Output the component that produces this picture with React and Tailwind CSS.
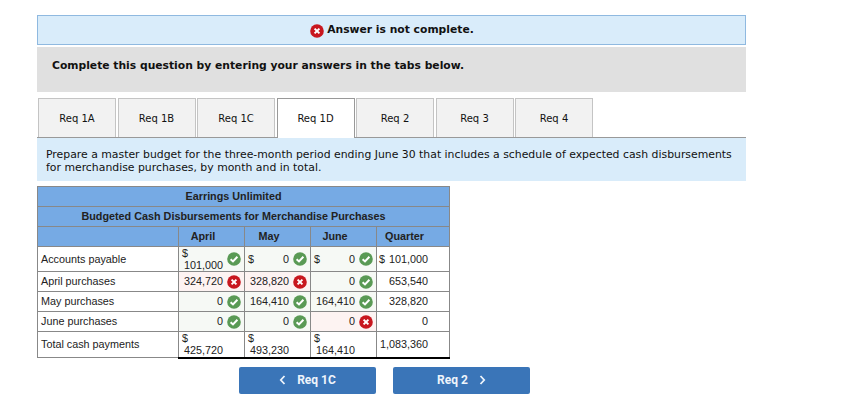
const tabs = ["Req 1A", "Req 1B", "Req 1C", "Req 1D", "Req 2", "Req 3", "Req 4"];

const Mark = ({ ok }) => (
  <svg width="14" height="14" viewBox="0 0 14 14" className="shrink-0">
    <circle cx="7" cy="7" r="6.8" fill={ok ? "#5a9a55" : "#c8171f"} />
    {ok ? (
      <path d="M3.6 7.2 L6 9.4 L10.4 4.8" fill="none" stroke="#fff" strokeWidth="2" />
    ) : (
      <path d="M4.6 4.6 L9.4 9.4 M9.4 4.6 L4.6 9.4" fill="none" stroke="#fff" strokeWidth="2" />
    )}
  </svg>
);

// answer cell: value + mark, optional $ sign on its own line or same line
const Cell = ({ v, ok, dollar, stacked }) => (
  <td className={`border border-[#888] p-0 ${ok ? "bg-[#f6f9f5]" : "bg-[#fdf3f2]"}`}>
    <div className="flex items-center justify-end pr-[3px] relative h-full">
      {dollar && (
        <span className={`absolute left-[3px] ${stacked ? "top-0 leading-[12px]" : ""}`}>$</span>
      )}
      <span className={`mr-[4px] ${stacked ? "pt-[12px] leading-[12px]" : ""}`}>{v}</span>
      <Mark ok={ok} />
    </div>
  </td>
);

const Total = ({ v }) => (
  <td className="border-x border-x-[#888] border-t border-t-black border-b-2 border-b-black p-0">
    <div className="relative flex justify-end pr-[21px] pt-[12px] leading-[12px] h-[24px]">
      <span className="absolute left-[3px] top-0 leading-[12px]">$</span>
      <span>{v}</span>
    </div>
  </td>
);

const Plain = ({ v }) => (
  <td className="border border-[#888] text-right pr-[21px] p-0">{v}</td>
);

const Label = ({ children }) => (
  <td className="border border-[#888] pl-[3px] p-0">{children}</td>
);

export default function App() {
  return (
    <div className="w-[865px] h-[407px] bg-white overflow-hidden pt-[15px] pl-[37px] font-['DejaVu_Sans',sans-serif] text-[#111]">
      <div className="w-[709px]">
        <div className="h-[30px] bg-[#d9ecfa] border border-[#8fb9e0] flex items-center justify-center gap-[3px] pl-[1px] pt-[1px] text-[10.75px] font-bold">
          <Mark ok={false} />
          <span>Answer is not complete.</span>
        </div>
        <div className="mt-[2px] h-[45px] bg-[#e0e0e0] pl-[15px] pt-[11px] text-[10.75px] font-bold leading-[16px]">
          Complete this question by entering your answers in the tabs below.
        </div>

        <div className="mt-[6px] h-[40px] flex gap-[1.5px] pl-[1px] border-b border-[#999]">
          {tabs.map((t) =>
            t === "Req 1D" ? (
              <div key={t} className="w-[78px] h-[40px] bg-white border border-b-0 border-[#999] flex items-center justify-center text-[10px]">
                {t}
              </div>
            ) : (
              <div key={t} className="w-[78px] h-[39px] bg-[#f2f2f2] border border-b-0 border-[#c4c4c4] flex items-center justify-center text-[10px]">
                {t}
              </div>
            )
          )}
        </div>

        <div className="h-[43px] bg-[#d9ecfa] pl-[9px] pt-[10px] text-[10.87px] leading-[13px]">
          Prepare a master budget for the three-month period ending June 30 that includes a schedule of expected cash disbursements
          <br />
          for merchandise purchases, by month and in total.
        </div>

        <table className="mt-[5px] w-[412px] table-fixed border-collapse font-['Liberation_Sans',sans-serif] text-[10.8px] text-[#222]">
          <colgroup>
            <col className="w-[141px]" />
            <col className="w-[66px]" />
            <col className="w-[66px]" />
            <col className="w-[66px]" />
            <col className="w-[73px]" />
          </colgroup>
          <tbody>
            <tr className="h-[20px] bg-[#76aae4]">
              <td colSpan={5} className="border border-[#888] text-center font-bold p-0 pr-[20px]">Earrings Unlimited</td>
            </tr>
            <tr className="h-[20px] bg-[#76aae4]">
              <td colSpan={5} className="border border-[#888] text-center font-bold p-0 pr-[20px]">Budgeted Cash Disbursements for Merchandise Purchases</td>
            </tr>
            <tr className="h-[20px] bg-[#76aae4] font-bold text-center">
              <td className="border border-[#888] p-0"></td>
              <td className="border border-[#888] p-0 pr-[17px]">April</td>
              <td className="border border-[#888] p-0 pr-[17px]">May</td>
              <td className="border border-[#888] p-0 pr-[17px]">June</td>
              <td className="border border-[#888] p-0 pr-[17px]">Quarter</td>
            </tr>
            <tr className="h-[25px]">
              <Label>Accounts payable</Label>
              <Cell v="101,000" ok dollar stacked />
              <Cell v="0" ok dollar />
              <Cell v="0" ok dollar />
              <td className="border border-[#888] p-0 pl-[2px] pr-[21px]">
                <div className="flex justify-between"><span>$</span><span>101,000</span></div>
              </td>
            </tr>
            <tr className="h-[20px]">
              <Label>April purchases</Label>
              <Cell v="324,720" />
              <Cell v="328,820" />
              <Cell v="0" ok />
              <Plain v="653,540" />
            </tr>
            <tr className="h-[20px]">
              <Label>May purchases</Label>
              <Cell v="0" ok />
              <Cell v="164,410" ok />
              <Cell v="164,410" ok />
              <Plain v="328,820" />
            </tr>
            <tr className="h-[20px]">
              <Label>June purchases</Label>
              <Cell v="0" ok />
              <Cell v="0" ok />
              <Cell v="0" />
              <Plain v="0" />
            </tr>
            <tr className="h-[26px]">
              <Label>Total cash payments</Label>
              <Total v="425,720" />
              <Total v="493,230" />
              <Total v="164,410" />
              <td className="border-x border-x-[#888] border-t border-t-black border-b-2 border-b-black text-right pr-[21px] p-0">1,083,360</td>
            </tr>
          </tbody>
        </table>

        <div className="mt-[8px] ml-[202px] flex gap-[17px] font-['Roboto',sans-serif] text-[12px] font-bold text-[#eef4fb]">
          <div className="w-[137px] h-[27px] bg-[#3a75b8] rounded-[2px] flex items-center justify-center gap-[11px]">
            <svg width="7" height="10" viewBox="0 0 7 10"><path d="M5.5 1 L1.8 5 L5.5 9" fill="none" stroke="currentColor" strokeWidth="1.8" /></svg>
            <span>Req 1C</span>
          </div>
          <div className="w-[137px] h-[27px] bg-[#3a75b8] rounded-[2px] flex items-center justify-center gap-[11px]">
            <span>Req 2</span>
            <svg width="7" height="10" viewBox="0 0 7 10"><path d="M1.5 1 L5.2 5 L1.5 9" fill="none" stroke="currentColor" strokeWidth="1.8" /></svg>
          </div>
        </div>
      </div>
    </div>
  );
}
